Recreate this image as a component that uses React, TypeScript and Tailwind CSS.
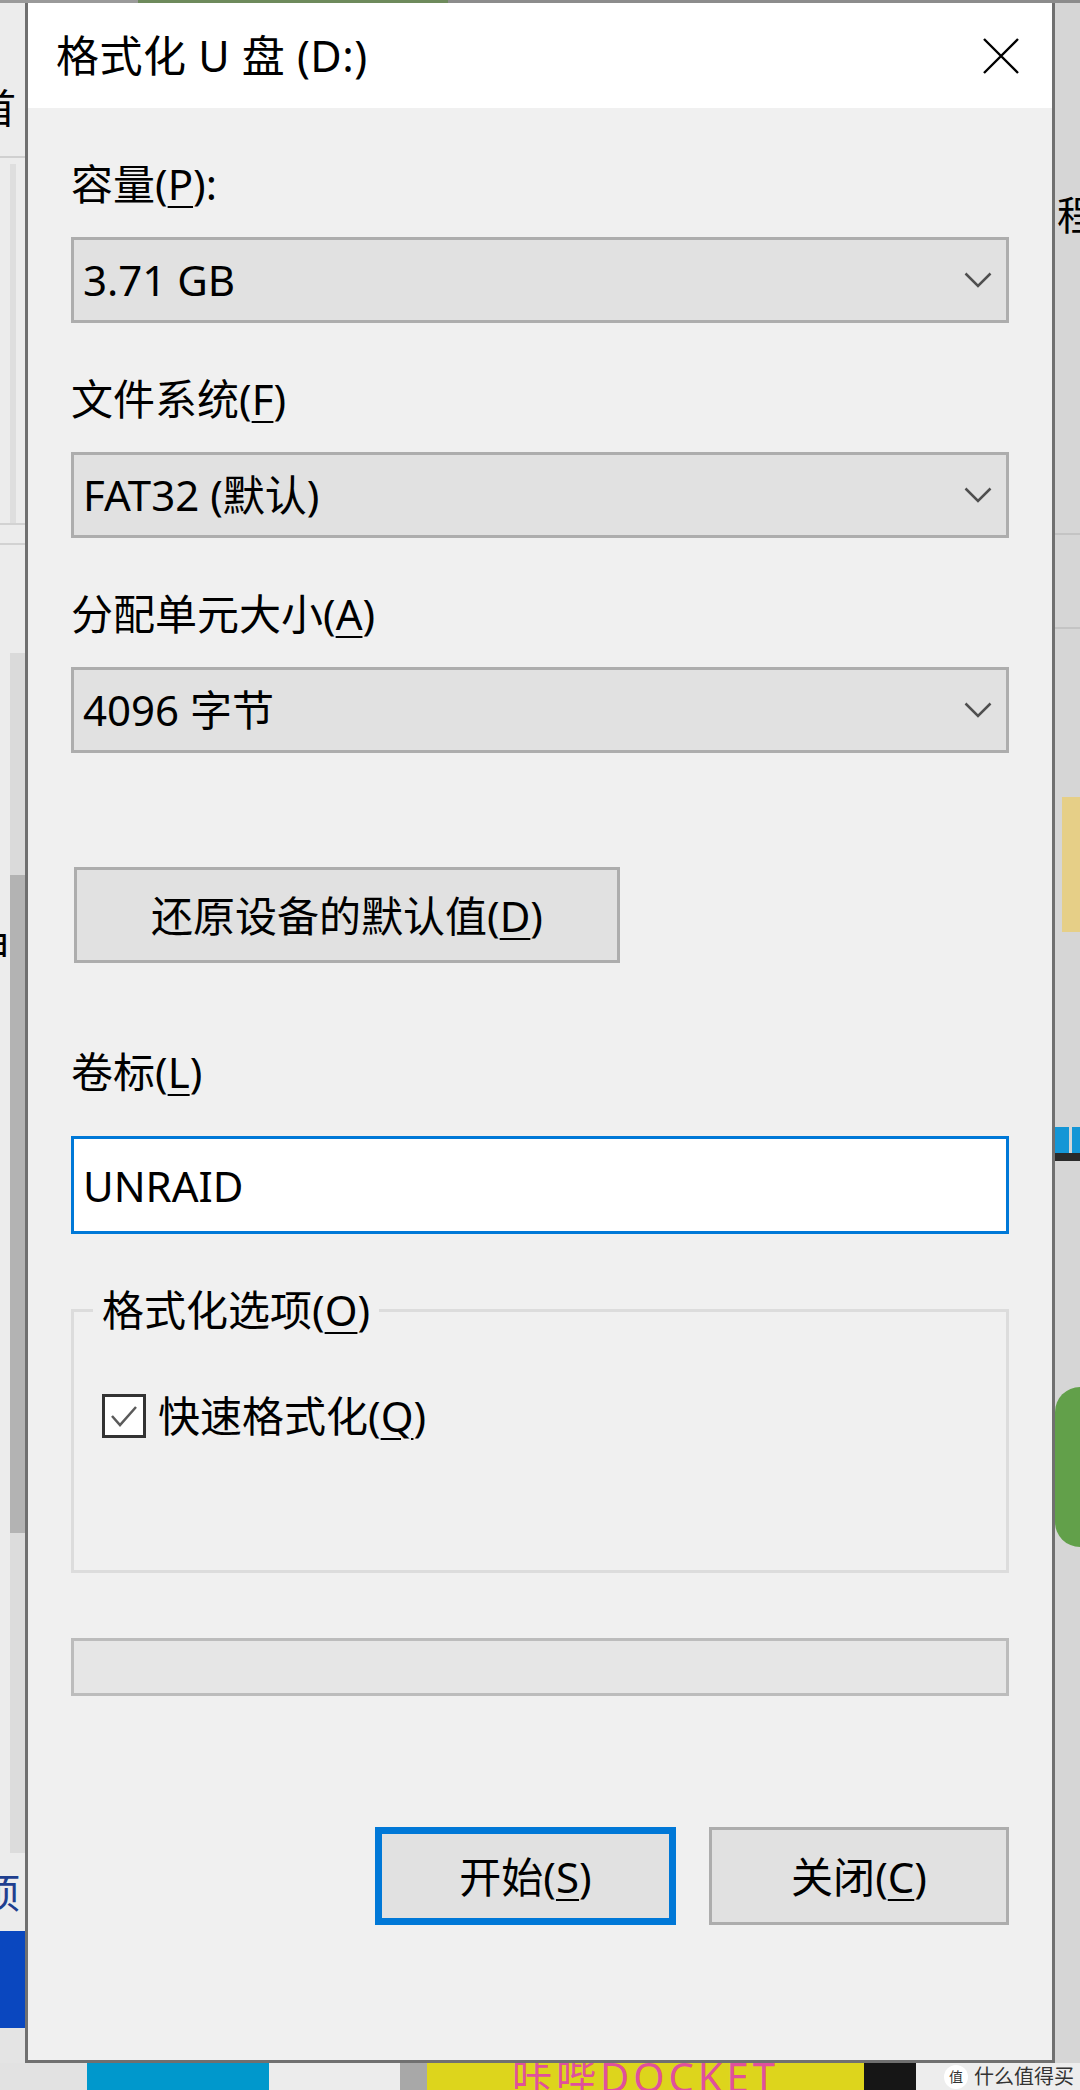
import React from "react";

const font = "font-['Noto_Sans','Noto_Sans_CJK_SC',sans-serif]";

function Key({ k }: { k: string }) {
    return (
        <>
            (<span className="underline decoration-2 underline-offset-[6px]">{k}</span>)
        </>
    );
}

function Label({ children }: { children: React.ReactNode }) {
    return <div className="mt-[52px] h-[48px] leading-[48px]">{children}</div>;
}

function Select({ value }: { value: string }) {
    return (
        <div className="mt-[29px] flex h-[86px] items-center justify-between border-[3px] border-[#adadad] bg-[#e1e1e1] pl-[9px] pr-[14px]">
            <span className="leading-none">{value}</span>
            <svg width="28" height="16" viewBox="0 0 28 16">
                <polyline points="1.5,1.5 14,14 26.5,1.5" fill="none" stroke="#4f4f4f" strokeWidth="2.5" />
            </svg>
        </div>
    );
}

function Button({ children, primary, width }: { children: React.ReactNode; primary?: boolean; width: string }) {
    return (
        <div
            className={`flex h-[98px] items-center justify-center bg-[#e1e1e1] ${width} ${
                primary ? "border-[7px] border-[#0078d7]" : "border-[3px] border-[#adadad]"
            }`}
        >
            {children}
        </div>
    );
}

// what shows of the window behind, left of the dialog
function LeftStrip() {
    return (
        <div className="flex flex-col overflow-hidden bg-[#ececec]">
            <div className="h-[84px]" />
            <div className="-ml-[24px] h-[42px] text-[40px] leading-[42px] text-black">首</div>
            <div className="h-[27px]" />
            <div className="h-[2px] bg-[#d0d0d0]" />
            <div className="flex h-[365px]">
                <div className="w-[10px]" />
                <div className="mt-[6px] w-[6px] bg-[#dedede]" />
            </div>
            <div className="h-[2px] bg-[#d2d2d2]" />
            <div className="h-[18px]" />
            <div className="h-[2px] bg-[#d2d2d2]" />
            <div className="h-[108px]" />
            <div className="flex h-[222px]">
                <div className="w-[10px]" />
                <div className="flex-1 bg-[#dadada]" />
            </div>
            <div className="flex h-[658px]">
                <div className="flex w-[10px] flex-col overflow-hidden">
                    <div className="h-[52px]" />
                    <div className="-ml-[30px] h-[40px] text-[40px] leading-[40px] text-black">申</div>
                </div>
                <div className="flex-1 bg-[#b3b3b3]" />
            </div>
            <div className="flex h-[320px]">
                <div className="w-[10px]" />
                <div className="flex-1 bg-[#dcdcdc]" />
            </div>
            <div className="flex h-[78px] flex-col">
                <div className="h-[20px]" />
                <div className="-ml-[20px] h-[40px] text-[40px] leading-[40px] text-[#1f3f8f]">项</div>
            </div>
            <div className="h-[97px] bg-[#0a47bf]" />
            <div className="flex-1 bg-[#e4e4e4]" />
        </div>
    );
}

// what shows of the desktop, right of the dialog
function RightStrip() {
    return (
        <div className="flex flex-col overflow-hidden bg-[#d6d6d6]">
            <div className="h-[195px]" />
            <div className="ml-[2px] h-[34px] text-[40px] leading-[34px] text-black">程</div>
            <div className="h-[301px]" />
            <div className="h-[2px] bg-[#c4c4c4]" />
            <div className="h-[92px]" />
            <div className="h-[2px] bg-[#c4c4c4]" />
            <div className="h-[168px]" />
            <div className="flex h-[135px]">
                <div className="w-[7px]" />
                <div className="flex-1 bg-[#e6cf87]" />
            </div>
            <div className="h-[195px]" />
            <div className="flex h-[26px] gap-[3px]">
                <div className="w-[14px] bg-[#1496d6]" />
                <div className="flex-1 bg-[#1496d6]" />
            </div>
            <div className="h-[8px] bg-[#2a2a2a]" />
            <div className="h-[226px]" />
            <div className="h-[160px] rounded-l-[40px] bg-[#62a04a]" />
            <div className="flex-1" />
        </div>
    );
}

export default function App() {
    return (
        <div className={`grid h-[2090px] w-[1080px] grid-cols-[25px_1030px_25px] grid-rows-[3px_2060px_27px] overflow-hidden bg-[#e6e6e6] text-black ${font}`}>
            {/* top sliver of what lies behind */}
            <div className="col-span-3 flex">
                <div className="w-[138px] bg-[#9a9a9a]" />
                <div className="w-[310px] bg-[#6e8a5c]" />
                <div className="flex-1 bg-[#8c8c8c]" />
            </div>

            <LeftStrip />

            {/* dialog window */}
            <div className="flex flex-col border-x-[3px] border-b-[3px] border-[#707070] text-[42px]">
                <div className="flex h-[105px] shrink-0 items-center justify-between bg-white pl-[28px] pr-[32px]">
                    <span className="text-[43px] leading-none tracking-[0.5px]">格式化 U 盘 (D:)</span>
                    <svg width="38" height="36" viewBox="0 0 38 36">
                        <path d="M2 1 L36 35 M36 1 L2 35" stroke="#000" strokeWidth="2.4" fill="none" />
                    </svg>
                </div>

                <div className="flex flex-1 flex-col bg-[#f0f0f0] px-[43px]">
                    <Label>
                        容量<Key k="P" />:
                    </Label>
                    <Select value="3.71 GB" />

                    <Label>
                        文件系统<Key k="F" />
                    </Label>
                    <Select value="FAT32 (默认)" />

                    <Label>
                        分配单元大小<Key k="A" />
                    </Label>
                    <Select value="4096 字节" />

                    <div className="ml-[3px] mt-[114px] flex h-[96px] w-[546px] items-center justify-center border-[3px] border-[#adadad] bg-[#e1e1e1]">
                        还原设备的默认值<Key k="D" />
                    </div>

                    <div className="mt-[85px] h-[48px] leading-[48px]">
                        卷标<Key k="L" />
                    </div>
                    <div className="mt-[40px] flex h-[98px] items-center border-[3px] border-[#0078d7] bg-white pl-[9px]">
                        UNRAID
                    </div>

                    <div className="relative mt-[75px] h-[264px] border-[3px] border-[#dcdcdc]">
                        <span className="absolute left-[19px] top-[-26px] bg-[#f0f0f0] px-[9px] leading-[48px]">
                            格式化选项<Key k="O" />
                        </span>
                        <div className="ml-[28px] mt-[80px] flex items-center gap-[12px]">
                            <div className="flex h-[44px] w-[44px] items-center justify-center border-[3px] border-[#333333] bg-white">
                                <svg width="28" height="24" viewBox="0 0 28 24">
                                    <polyline points="2,12 10,21 26,3" fill="none" stroke="#5a5a5a" strokeWidth="2.5" />
                                </svg>
                            </div>
                            <span className="leading-[48px]">
                                快速格式化<Key k="Q" />
                            </span>
                        </div>
                    </div>

                    <div className="mt-[65px] h-[58px] border-[3px] border-[#bcbcbc] bg-[#e6e6e6]" />

                    <div className="mt-[131px] flex justify-end gap-[33px]">
                        <Button primary width="w-[301px]">
                            开始<Key k="S" />
                        </Button>
                        <Button width="w-[300px]">
                            关闭<Key k="C" />
                        </Button>
                    </div>
                </div>
            </div>

            <RightStrip />

            {/* bottom sliver of what lies behind */}
            <div className="col-span-3 flex overflow-hidden">
                <div className="w-[87px] bg-[#e2e2e2]" />
                <div className="w-[182px] bg-[#0098cc]" />
                <div className="w-[131px] bg-[#ececec]" />
                <div className="w-[27px] bg-[#a8a8a8]" />
                <div className="flex w-[437px] justify-center overflow-hidden bg-[#ddd51c]">
                    <span className="-mt-[6px] text-[40px] leading-[40px] tracking-[4px] text-[#e0509c]">咔哔DOCKET</span>
                </div>
                <div className="w-[52px] bg-[#161616]" />
                <div className="flex flex-1 items-center justify-end gap-[6px] bg-[#ededed] pr-[6px]">
                    <span className="flex h-[24px] w-[24px] items-center justify-center rounded-full bg-white text-[14px] text-[#333]">值</span>
                    <span className="text-[20px] leading-none text-[#333]">什么值得买</span>
                </div>
            </div>
        </div>
    );
}
